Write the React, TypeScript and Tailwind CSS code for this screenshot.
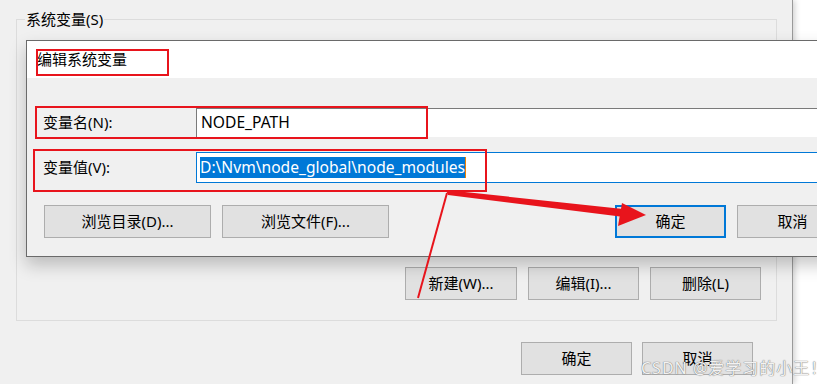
import React from 'react'

const font = { fontFamily: '"Noto Sans", "Noto Sans CJK SC", sans-serif' }

function WinButton({ label, className = '' }: { label: string; className?: string }) {
  return (
    <div
      className={`flex h-[33px] items-center justify-center border border-[#adadad] bg-[#e1e1e1] text-[15px] text-black ${className}`}
    >
      {label}
    </div>
  )
}

export default function App() {
  return (
    <div className="relative h-[384px] w-[817px] overflow-hidden bg-white" style={font}>
      {/* parent window: 环境变量 */}
      <div className="relative h-[384px] w-[793px] border-r border-[#9a9a9a] bg-[#f0f0f0] shadow-[2px_0_6px_rgba(0,0,0,0.18)]">
        <div className="pl-[16px] pt-[19px]">
          <fieldset className="relative h-[302px] w-[761px] border border-[#dcdcdc]">
            <span className="absolute left-[8px] top-[-11px] bg-[#f0f0f0] px-[1px] text-[15px] leading-[20px] text-black">
              系统变量(S)
            </span>
            <div className="flex justify-end gap-[11px] pr-[15px] pt-[247px]">
              <WinButton label="新建(W)..." className="w-[112px]" />
              <WinButton label="编辑(I)..." className="w-[111px]" />
              <WinButton label="删除(L)" className="w-[111px]" />
            </div>
          </fieldset>
          <div className="flex justify-end gap-[10px] pr-[39px] pt-[21px]">
            <WinButton label="确定" className="w-[111px]" />
            <WinButton label="取消" className="w-[111px]" />
          </div>
        </div>
      </div>

      {/* edit dialog overlay */}
      <div className="absolute left-[26px] top-[40px] h-[217px] w-[900px] border border-[#6a6a6a] bg-[#f0f0f0] shadow-[0_8px_16px_rgba(0,0,0,0.22)]">
        <div className="flex h-[37px] items-center bg-white pl-[10px] text-[15px] text-black">编辑系统变量</div>
        <div className="pl-[16px] pt-[30px]">
          <div className="flex h-[29px] items-center">
            <div className="w-[153px] text-[15px] text-black">变量名(N):</div>
            <div className="flex h-[29px] flex-1 items-center border-l border-t border-[#7a7a7a] bg-white pl-[4px] text-[15.6px] text-black">
              NODE_PATH
            </div>
          </div>
          <div className="mt-[15px] flex h-[31px] items-center">
            <div className="w-[153px] text-[15px] text-black">变量值(V):</div>
            <div className="flex h-[31px] flex-1 items-center border border-[#0078d7] bg-white pl-[3px] text-[15.6px]">
              <span className="bg-[#0078d7] leading-[21px] text-white">D:\Nvm\node_global\node_modules</span>
              <span className="h-[21px] w-px bg-[#f08000]" />
            </div>
          </div>
          <div className="mt-[22px] flex pl-[1px]">
            <WinButton label="浏览目录(D)..." className="w-[167px]" />
            <WinButton label="浏览文件(F)..." className="ml-[11px] w-[167px]" />
            <div className="ml-[226px] flex h-[33px] w-[111px] items-center justify-center border-2 border-[#0078d7] bg-[#e1e1e1] text-[15px] text-black">
              确定
            </div>
            <WinButton label="取消" className="ml-[11px] w-[111px]" />
          </div>
        </div>
      </div>

      {/* red annotations */}
      <div className="absolute left-[36px] top-[49px] h-[27px] w-[133px] border-2 border-[#e8141c]" />
      <div className="absolute left-[35px] top-[106px] h-[33px] w-[393px] border-2 border-[#e8141c]" />
      <div className="absolute left-[33px] top-[149px] h-[43px] w-[454px] border-2 border-[#e8141c]" />
      <svg className="absolute left-0 top-0" width="817" height="384" viewBox="0 0 817 384">
        <polygon points="446,190 448,195 624,217 623,209" fill="#e8141c" />
        <polygon points="622,203 646,215 618,226" fill="#e8141c" />
        <line x1="447" y1="193" x2="418" y2="298" stroke="#e8141c" strokeWidth="2" />
      </svg>

      {/* watermark */}
      <div
        className="absolute left-[641px] top-[357px] whitespace-nowrap text-[16px] leading-[22px] tracking-[1px] text-[#f2f2f2]"
        style={{ textShadow: '0 0 1px #7a7a7a, 0 0 1px #7a7a7a' }}
      >
        CSDN @爱学习的小王！
      </div>
    </div>
  )
}
